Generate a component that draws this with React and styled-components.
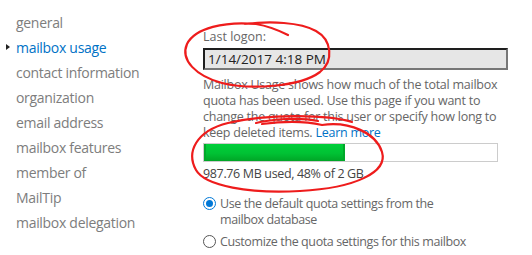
import React from "react";
import styled, { createGlobalStyle } from "styled-components";

const COLORS = {
  text: "#666666",
  dark: "#444444",
  blue: "#0072c6",
  red: "#ee1c1c",
};

const GlobalStyle = createGlobalStyle`
html, body {
  margin: 0;
  padding: 0;
  background: #ffffff;
}
body {
  font-family: "Open Sans", "Noto Sans", "Liberation Sans", sans-serif;
}
`;

const Page = styled.div`
position: relative;
width: 532px;
height: 255px;
display: flex;
overflow: hidden;
`;

const Nav = styled.ul`
list-style: none;
margin: 0;
padding: 10px 0 0 0;
width: 203px;
flex-shrink: 0;
`;

const NavItem = styled.li`
position: relative;
padding-left: 16px;
height: 25px;
line-height: 25px;
font-size: 14px;
letter-spacing: -0.3px;
color: ${props => props.active ? COLORS.blue : "#7d7d7d"};

&::before {
  content: "";
  display: ${props => props.active ? "block" : "none"};
  position: absolute;
  left: 6px;
  top: 9px;
  border-style: solid;
  border-width: 3.5px 0 3.5px 4.5px;
  border-color: transparent transparent transparent #222;
}
`;

const Content = styled.div`
width: 305px;
padding-top: 29px;
`;

const Label = styled.div`
font-size: 12.5px;
line-height: 16px;
color: ${COLORS.text};
height: 19px;
`;

const ReadOnlyBox = styled.div`
box-sizing: border-box;
width: 305px;
height: 22px;
background: #e6e6e6;
border-top: 2px solid #1e1e1e;
border-left: 2px solid #1e1e1e;
border-bottom: 2px solid #777777;
border-right: 2px solid #777777;
padding-left: 3px;
font-size: 13.5px;
line-height: 18px;
color: #222222;
margin-bottom: 7px;
`;

const Description = styled.p`
margin: 0;
width: 295px;
font-size: 12.5px;
line-height: 16px;
color: ${COLORS.text};
letter-spacing: -0.25px;
`;

const Link = styled.a`
color: ${COLORS.blue};
text-decoration: none;
`;

const GaugeTrack = styled.div`
box-sizing: border-box;
width: 295px;
height: 19px;
margin-top: 2px;
border: 1px solid #cccccc;
background: #ffffff;
display: flex;
`;

const GaugeFill = styled.div`
height: 100%;
background: linear-gradient(to bottom, #00cf3a 0%, #00c234 55%, #00a526 100%);
box-shadow: inset 2px 0 0 #00a82a, inset -2px 0 0 #00a82a;
`;

const UsageText = styled.div`
font-size: 12.5px;
line-height: 16px;
color: ${COLORS.dark};
margin-top: 4px;
letter-spacing: -0.35px;
`;

const RadioGroup = styled.div`
margin-top: 14px;
display: flex;
flex-direction: column;
gap: 6px;
`;

const RadioRow = styled.label`
display: flex;
align-items: flex-start;
gap: 4px;
font-size: 12.5px;
line-height: 16px;
color: ${COLORS.text};
letter-spacing: -0.4px;
`;

const RadioCircle = styled.span`
box-sizing: border-box;
flex-shrink: 0;
width: 13px;
height: 13px;
margin-top: 1px;
border-radius: 50%;
border: 1px solid ${props => props.checked ? "#0078d7" : "#555555"};
display: flex;
align-items: center;
justify-content: center;
background: #fff;

&::after {
  content: "";
  display: ${props => props.checked ? "block" : "none"};
  width: 7px;
  height: 7px;
  border-radius: 50%;
  background: #0078d7;
}
`;

const Annotations = styled.svg`
position: absolute;
left: 0;
top: 0;
pointer-events: none;
`;

const navItems = [
  "general",
  "mailbox usage",
  "contact information",
  "organization",
  "email address",
  "mailbox features",
  "member of",
  "MailTip",
  "mailbox delegation",
];

export default function App() {
  const usedPercent = 48;
  return (
    <>
      <GlobalStyle />
      <Page>
        <Nav>
          {navItems.map(item => (
            <NavItem key={item} active={item === "mailbox usage"}>{item}</NavItem>
          ))}
        </Nav>
        <Content>
          <Label>Last logon:</Label>
          <ReadOnlyBox>1/14/2017 4:18 PM</ReadOnlyBox>
          <Description>
            Mailbox Usage shows how much of the total mailbox quota has been used. Use this page if you want to
            change the quota for this user or specify how long to keep deleted items. <Link href="#">Learn more</Link>
          </Description>
          <GaugeTrack>
            <GaugeFill style={{ width: `${usedPercent}%` }} />
          </GaugeTrack>
          <UsageText>987.76 MB used, 48% of 2 GB.</UsageText>
          <RadioGroup>
            <RadioRow>
              <RadioCircle checked />
              <span>Use the default quota settings from the<br />mailbox database</span>
            </RadioRow>
            <RadioRow>
              <RadioCircle />
              <span>Customize the quota settings for this mailbox</span>
            </RadioRow>
          </RadioGroup>
        </Content>
        <Annotations width="532" height="255" viewBox="0 0 532 255">
          <g fill="none" stroke={COLORS.red} strokeWidth="2.2" strokeLinecap="round" strokeLinejoin="round">
            <path d="M288,35 C278,30 268,26 256,24 C225,21 195,28 187,44 C180,60 196,76 222,83 C250,90 300,87 320,72 C334,61 332,40 316,31 C300,22 270,21 245,24" />
            <path d="M256,123 C272,119 300,117 318,121 M262,124 C285,121 305,121 322,125 C350,121 376,133 382,152 C388,172 356,188 300,191 C250,194 205,186 196,170 C186,152 196,131 228,123 C270,113 330,115 352,122" />
          </g>
        </Annotations>
      </Page>
    </>
  );
}
